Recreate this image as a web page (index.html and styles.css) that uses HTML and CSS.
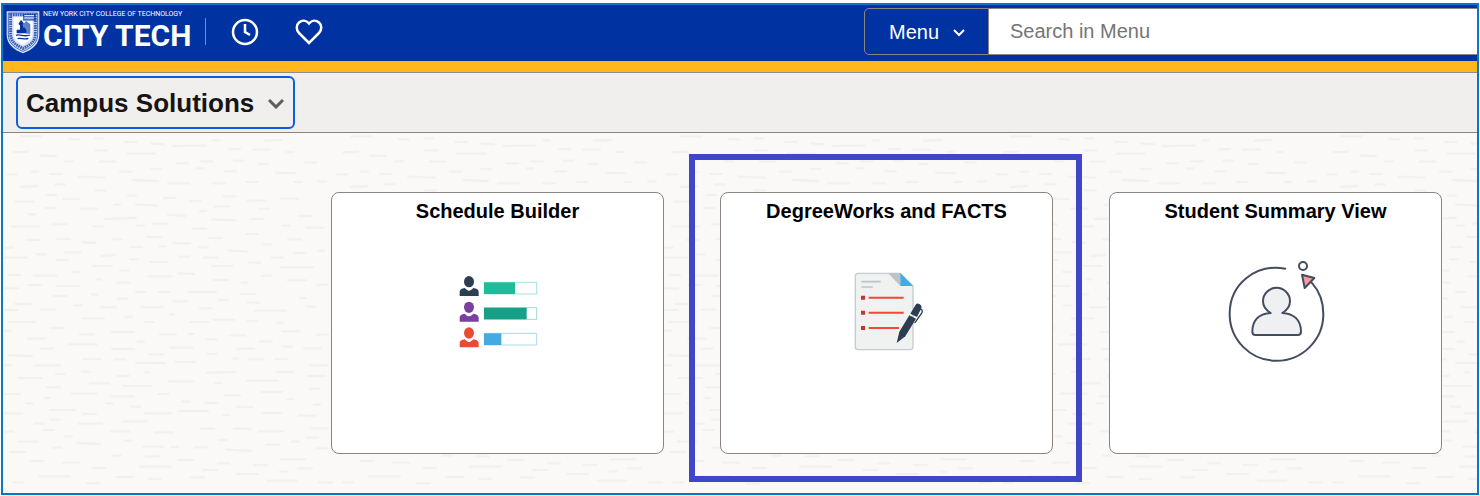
FILE: index.html
```html
<!DOCTYPE html>
<html lang="en">
  <head>
    <meta charset="UTF-8" />
    <meta name="viewport" content="width=device-width, initial-scale=1.0" />
    <title>Campus Solutions</title>
    <link rel="stylesheet" href="styles.css">
  </head>
  <body>
    <div class="page">
      <header class="header">
        <a class="logo" href="#">
          <svg class="logo-shield" viewBox="16 25 102 132" aria-hidden="true">
            <path d="M18 29h98v70c0 28-20 44-49 56-29-12-49-28-49-56z" fill="#dbe3f6" />
            <path d="M23 34h88v64c0 25-16 39-44 51-28-12-44-26-44-51z" fill="none" stroke="#0033a1" stroke-width="2" />
            <path d="M30 39h74v58c0 22-14 33-37 43-23-10-37-21-37-43z" fill="none" stroke="#0033a1" stroke-width="9" stroke-dasharray="5 2" opacity=".75" />
            <path d="M39 47h56v48c0 17-10 25-28 34-18-9-28-17-28-34z" fill="#fff" />
            <path d="M67 37h38v20H67z" fill="#0033a1" opacity=".7" />
            <path d="M71 42h29M71 49h29" stroke="#fff" stroke-width="3" />
            <path d="M48 84h10v-13l-5-4 8-12 8 9v14l9-8 6 9v16H48z" fill="#0033a1" />
            <path d="M65 70l12-12 12 10v28H77V84z" fill="#5f7fc7" />
            <path d="M46 101c12-5 24 6 42-1M51 111c10-4 20 4 32-1" fill="none" stroke="#0033a1" stroke-width="4" />
          </svg>
          <span class="logo-text">
            <span class="logo-college">NEW YORK CITY COLLEGE OF TECHNOLOGY</span>
            <span class="logo-name">CITY TECH</span>
          </span>
        </a>
        <span class="divider"></span>
        <button type="button" class="icon-button" aria-label="Recently visited">
          <svg viewBox="0 0 28 28" aria-hidden="true">
            <circle cx="14" cy="14" r="12" />
            <path d="M14 6v8l5 3" />
          </svg>
        </button>
        <button type="button" class="icon-button" aria-label="Favorites">
          <svg viewBox="0 0 28 28" aria-hidden="true">
            <path d="M14 25L4 15C1 12 1 7 4 4.500C7 2 11 2 14 5.500C17 2 21 2 24 4.500C27 7 27 12 24 15z" />
          </svg>
        </button>
        <form class="search">
          <button type="button" class="menu-button">
            Menu
            <svg class="menu-arrow" viewBox="0 0 12 8" aria-hidden="true"><path d="M1 1l5 5 5-5" /></svg>
          </button>
          <input type="text" class="search-input" placeholder="Search in Menu" aria-label="Search in Menu" />
        </form>
      </header>

      <div class="toolbar">
        <button type="button" class="homepage-button">
          Campus Solutions
          <svg class="homepage-arrow" viewBox="0 0 16 10" aria-hidden="true"><path d="M1 1l7 7 7-7" /></svg>
        </button>
      </div>

      <main class="tiles">
        <a class="tile" href="#">
          <h2 class="tile-title">Schedule Builder</h2>
          <svg class="tile-icon" viewBox="-9 -30 360 360" aria-hidden="true">
            <defs>
              <g id="person">
                <ellipse cx="84" cy="65" rx="15" ry="17" />
                <path d="M56 108V97c0-9 7-12 15-13 5 4 8 8 13 8s9-4 13-8c9 1 16 4 16 13v11z" />
              </g>
            </defs>
            <use href="#person" fill="#2c3e50" />
            <use href="#person" y="77" fill="#7b3fa0" />
            <use href="#person" y="154" fill="#e94b35" />
            <g stroke-width="3">
              <path d="M130 67h157v35H130z" fill="#fff" stroke="#a3e4d7" />
              <path d="M130 143h157v35H130z" fill="#fff" stroke="#a2d9ce" />
              <path d="M130 220h157v35H130z" fill="#fff" stroke="#a9d8f3" />
            </g>
            <path d="M129 67h93v35h-93z" fill="#1fbc9c" />
            <path d="M129 143h128v35H129z" fill="#17a087" />
            <path d="M129 220h52v35h-52z" fill="#45aae0" />
          </svg>
        </a>

        <a class="tile tile-selected" href="#">
          <h2 class="tile-title">DegreeWorks and FACTS</h2>
          <svg class="tile-icon" viewBox="-27 -30 360 360" aria-hidden="true">
            <path d="M66 40h127l38 38v183q0 8-8 8H66q-8 0-8-8V48q0-8 8-8z" fill="#f0f1f1" stroke="#c5cccf" stroke-width="4" />
            <path d="M156 39h37v39z" fill="#bdc3c7" />
            <path d="M193 39l38 39h-38z" fill="#45aae0" />
            <path d="M76 65h58M76 81h34" stroke="#bdc3c7" stroke-width="5" />
            <path d="M98 113h105M98 158h105M98 204h91" stroke="#ee4a37" stroke-width="6" />
            <path d="M75 107h12v12H75zM75 152h12v12H75zM75 198h12v12H75z" fill="#c0392b" />
            <path d="M239 134q4-6 11-2l3 2q6 4 3 11l-13 26-20-10z" fill="#2c3e50" />
            <path d="M220 166l20 10-32 53-26 20 8-34z" fill="#2c3e50" />
            <path d="M251 146q10 3 7 12l-21 30" fill="none" stroke="#2c3e50" stroke-width="4" stroke-linecap="round" />
          </svg>
        </a>

        <a class="tile" href="#">
          <h2 class="tile-title">Student Summary View</h2>
          <svg class="tile-icon" viewBox="0 0 360 360" aria-hidden="true">
            <g fill="none" stroke="#444c60" stroke-width="6" stroke-linecap="round" stroke-linejoin="round">
              <path d="M208 56C120 40 41 102 41 192a140 140 0 0 0 281 0c0-36-13-70-35-94" />
              <circle cx="261" cy="48" r="12" />
              <path d="M258 74l37 10-29 30z" fill="#f79a9a" />
              <path d="M164 189c-14-8-23-20-23-35a40 40 0 0 1 81 0c0 15-9 27-23 35 33 2 56 20 56 56q0 10-10 10H118q-9 0-9-10c0-36 22-54 55-56z" fill="#eff0f2" />
            </g>
          </svg>
        </a>
      </main>
    </div>
  </body>
</html>
```

FILE: styles.css
```css
* {
  box-sizing: border-box;
}
body {
  margin: 3px 1px 1px;
  font-family: "Liberation Sans", Arial, sans-serif;
  background-color: #fff;
}
.page {
  display: flex;
  flex-direction: column;
  min-height: calc(100vh - 4px);
  border: 2px solid #0b76c4;
}
button,
input {
  font-family: inherit;
  font-size: 20px;
}

/* Header */
.header {
  display: flex;
  align-items: center;
  height: 67px;
  padding: 3px 0 6px 3px;
  background-color: #0033a1;
  border-bottom: 11px solid #ffb71b;
}
.logo {
  display: flex;
  align-items: center;
  gap: 3px;
  width: 183px;
  color: #fff;
  text-decoration: none;
}
.logo-shield {
  flex: none;
  width: 34px;
  height: 44px;
}
.logo-text {
  display: flex;
  flex-direction: column;
  font-family: Roboto, "Liberation Sans", sans-serif;
  white-space: nowrap;
}
.logo-college {
  font-size: 7px;
  line-height: 9px;
}
.logo-name {
  font-size: 30px;
  line-height: 34px;
  font-weight: bold;
}
.divider {
  width: 1px;
  height: 27px;
  margin: 0 25px 0 16px;
  background-color: #8b8a91;
}
.icon-button {
  width: 28px;
  height: 28px;
  margin-right: 36px;
  padding: 0;
  border: none;
  background: none;
  cursor: pointer;
}
.icon-button svg {
  display: block;
  fill: none;
  stroke: #fff;
  stroke-width: 2.5;
}
.search {
  display: flex;
  flex: 0 1 613px;
  align-self: stretch;
  margin: 0 0 0 auto;
}
.menu-button {
  display: flex;
  align-items: center;
  gap: 14px;
  width: 125px;
  padding: 2px 24px 0;
  border: 1px solid #8b8581;
  border-radius: 5px 0 0 5px;
  background-color: #0033a1;
  color: #fff;
  cursor: pointer;
}
.menu-arrow {
  flex: none;
  width: 12px;
  height: 8px;
  fill: none;
  stroke: #fff;
  stroke-width: 2;
}
.search-input {
  flex: 1;
  min-width: 0;
  padding: 0 21px;
  border: 1px solid #8b8581;
  border-width: 1px 0;
  background-color: #fff;
}
.search-input::placeholder {
  color: #757575;
}

/* Homepage selector */
.toolbar {
  padding: 3px 13px;
  border-top: 1px solid #8f8c88;
  border-bottom: 1px solid #8b8581;
  background-color: #f0efed;
}
.homepage-button {
  display: flex;
  align-items: center;
  gap: 14px;
  height: 53px;
  padding: 2px 9px 0 8px;
  border: 2px solid #0a5fdf;
  border-radius: 6px;
  background-color: #f0efed;
  color: #161513;
  font-size: 26px;
  font-weight: bold;
  cursor: pointer;
}
.homepage-arrow {
  width: 16px;
  height: 10px;
  fill: none;
  stroke: #5f5d5a;
  stroke-width: 3;
}

/* Tiles */
.tiles {
  display: grid;
  grid-template-columns: repeat(3, minmax(0, 333px));
  justify-content: end;
  align-content: start;
  gap: 56px;
  flex: 1;
  padding: 59px 35px 38px;
  background-color: #faf9f7;
  background-image: url("data:image/svg+xml,%3Csvg xmlns='http://www.w3.org/2000/svg' width='330' height='360' viewBox='9 9 990 1080'%3E%3Cpath fill='none' stroke='%23f2f1ef' stroke-width='7' stroke-linecap='round' d='M64 19h60M207 27l30 2M286 25h24M376 36h34M454 40l38 3M520 48l94-1M640 31h18M793 32l52-2M688 58l32-1M760 59h50M860 66h20M40 67l44-2M122 77l46 1M284 61h36M382 71h82M194 94h26M300 95h46M530 100h34M604 94h34M702 92h28M778 102h25M916 97h32M94 125h20M150 132h34M234 140l80 3M360 125h32M452 117h30M590 115h20M676 124h32M828 128l58 2M22 133h30M62 171l50-3M166 163h28M286 181h32M400 150l74 3M504 160h62M638 160h36M740 156h32M884 156h20M954 154h24M142 195h26M190 207h46M384 197h24M492 205l32-2M570 213h30M670 199h36M744 212h54M842 206h52M46 215h56M134 234h28M242 236h50M344 224h16M408 223l62 4M600 243h18M642 229h46M780 236h26M88 253h18M36 289h82M156 283h44M280 289h28M314 267l94-3M410 287h22M504 254l52 4M460 281h42M636 268l70 3M754 267h34M898 258h38M848 287h22M920 293h48M82 330h36M170 327h40M248 336l38 3M338 328h28M440 320l44 2M580 296h38M626 324h38M738 312h36M864 328h38M16 353h22M112 373h22M194 367h50M170 390h34M304 378l40-3M392 351h34M476 349h20M520 340h50M596 352h28M686 361l54 4M786 343h28M882 369h32M956 362h16M12 383h68M392 388h22M450 396h50M540 380h26M612 383h42M746 398h34M814 383h34M280 408h56M220 426h20M102 437h70M28 435h32M362 422h22M446 439h68M536 430l46 2M636 408h62M842 412h98M786 437h28M642 450h42M864 451h54M86 465h36M170 468h68M12 475h42M290 448h14M352 458h36M726 458h16M408 486h28M476 486h34M566 486h82M722 492h44M952 464h28M160 498h38M276 493h18M354 506h26M520 514h42M658 510h26M744 518h32M900 504h18M46 522h46M222 526h24M124 539h42M14 540h38M302 532h46M424 532h64M600 535h32M764 542h94M920 530h26M510 553h12M28 576h76M246 565h66M376 560h20M434 576h26M570 576h54M640 569h62M744 573h28M832 578h16M152 594h40M14 602h18M240 613h38M334 606h68M480 613h48M566 612h14M690 616h44M848 604h50M952 614h32M84 626h52M414 635h18M618 628h32M780 634h36M124 656h34M206 643h84M336 657h66M512 653h66M712 656h50M848 650h28M912 655h54M26 676l70 2M448 673h42M622 672h28M250 687h50M344 688h34M700 686h14M746 688h44M828 687h32M14 706h20M106 706h74M408 698l86 2M526 696h60M930 706h50M246 725h24M168 732h26M56 744h70M434 727h12M354 738h32M620 728l84-2M830 726h48M924 738h50M270 760h60M508 754h72M644 759h20M740 752h92M140 772h40M370 768h84M930 776h26M12 792h48M212 791h78M330 799h70M476 792h30M676 796h44M784 786h62M136 804h14M80 820h18M320 820h18M546 815h20M616 819h34M864 807h16M942 824h18M150 840h76M250 852h38M392 830h28M436 850h78M538 843h86M668 855h20M712 831h46M788 849h54M896 857h50M14 850h52M154 869h24M236 881h70M370 874h70M104 881h28M16 905h24M130 900h32M332 904h54M466 907h52M602 896h40M702 896h50M776 904h72M930 895h54M194 919h22M54 935h56M230 939l70 3M376 932h18M656 930h22M876 935h20M922 923h32M160 953h24M430 950h58M516 951h18M586 952h34M680 959l74 4M800 944h36M950 955h30M30 966h46M338 977h24M438 979h38M92 993h38M188 998h50M534 990h46M654 1000h36M762 1005h38M844 988h72M280 1014h38M420 1010h92M610 1020h42M894 1015h42M118 1039h92M350 1041h48M448 1047h34M574 1042h38M712 1032h62M840 1025h20M40 1057h30M260 1060h38M804 1052h84M958 1057h38'/%3E%3C/svg%3E");
}
.tile {
  position: relative;
  display: flex;
  flex-direction: column;
  align-items: center;
  min-height: 262px;
  padding: 6px 8px;
  border: 1px solid #8b8581;
  border-radius: 8px;
  background-color: #fff;
  color: #000;
  text-decoration: none;
}
.tile-selected::after {
  content: "";
  position: absolute;
  inset: -39px -30px -29px -32px;
  border: 6px solid #4046c8;
}
.tile-title {
  margin: 0 0 27px;
  font-size: 20px;
  line-height: 24px;
}
.tile-icon {
  width: 120px;
  height: 120px;
}
```
